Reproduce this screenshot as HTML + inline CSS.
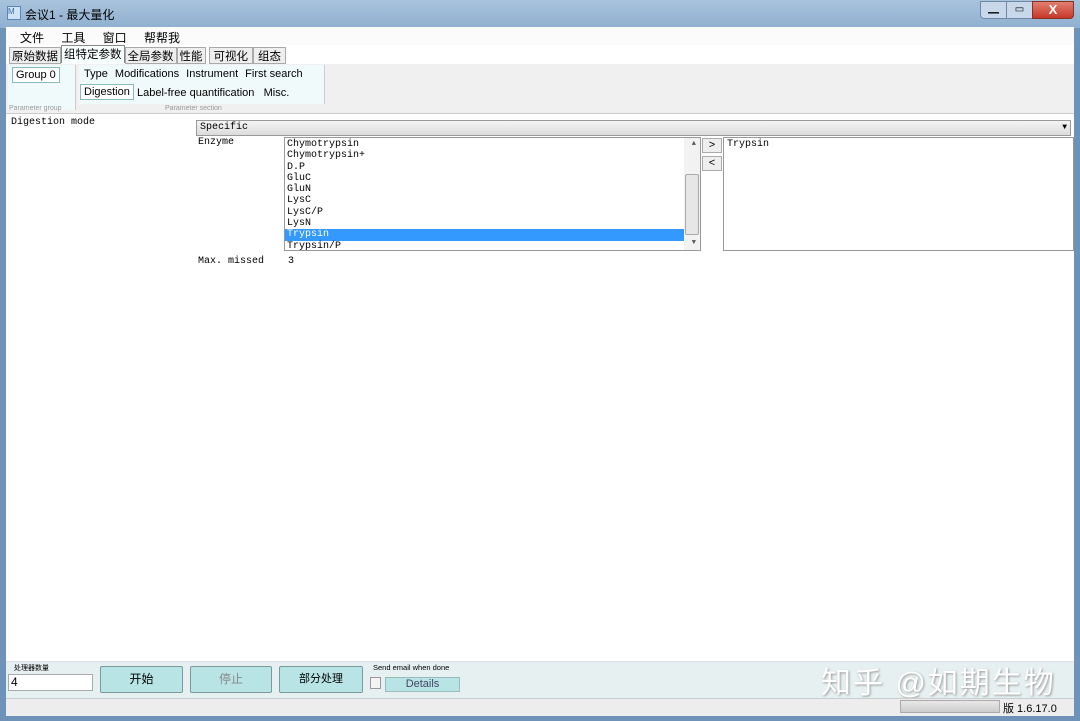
<!DOCTYPE html>
<html><head><meta charset="utf-8"><style>
*{margin:0;padding:0;box-sizing:border-box}
body{width:1080px;height:721px;overflow:hidden;background:#6f93b8;font-family:"Liberation Sans","Noto Sans CJK SC",sans-serif;font-size:11px;color:#000;position:relative}
.a{position:absolute}
.mono{font-family:"Liberation Mono","Noto Sans CJK SC",monospace;font-size:10px}
.btn{position:absolute;top:666px;height:27px;background:#b8e4e6;border:1px solid #7a9a9c;border-radius:2px;text-align:center;line-height:25px;font-size:12px}
</style></head><body>
<div class="a" style="left:0;top:0;width:1080px;height:28px;background:linear-gradient(#a9c3dc,#8fb0d0)"></div>
<div class="a" style="left:7px;top:6px;width:14px;height:14px;background:#cfe3f7;border:1px solid #5a86b5;font-size:8px;color:#3b6ea5">M</div>
<div class="a" style="left:25px;top:6px;font-size:12px">会议1 - 最大量化</div>
<div class="a" style="left:980px;top:1px;width:27px;height:18px;background:#c8d8ea;border:1px solid #6e8aa8;border-radius:0 0 0 4px;text-align:center;font-size:11px;line-height:14px">▁</div>
<div class="a" style="left:1006px;top:1px;width:27px;height:18px;background:#c8d8ea;border:1px solid #6e8aa8;text-align:center;font-size:10px;line-height:16px">▭</div>
<div class="a" style="left:1032px;top:1px;width:42px;height:18px;background:linear-gradient(#e08070,#c8382a);border:1px solid #8a3020;border-radius:0 0 4px 0;color:#fff;text-align:center;font-weight:bold;font-size:13px;line-height:16px">X</div>
<div class="a" style="left:6px;top:27px;width:1068px;height:689px;background:#fff"></div>
<div class="a" style="left:6px;top:27px;width:1068px;height:19px;background:#fbfbfb"></div>
<div class="a" style="left:20px;top:29px;font-size:12px;word-spacing:14px">文件 工具 窗口 帮帮我</div>
<div class="a" style="left:6px;top:45px;width:1068px;height:20px;background:#fff"></div>
<div class="a" style="left:9px;top:47px;font-size:11.5px;display:flex">
<span style="border:1px solid #aaa;background:#eee;padding:0 2px;height:17px">原始数据</span>
<span style="border:1px solid #888;border-bottom:none;background:#f8ffff;padding:0 2px;height:18px;margin-top:-2px">组特定参数</span>
<span style="border:1px solid #aaa;background:#eee;padding:0 2px;height:17px">全局参数</span>
<span style="border:1px solid #aaa;background:#eee;padding:0 2px;height:17px">性能</span>
<span style="border:1px solid #aaa;background:#eee;padding:0 4px;height:17px;margin-left:3px">可视化</span>
<span style="border:1px solid #aaa;background:#eee;padding:0 4px;height:17px">组态</span></div>
<div class="a" style="left:6px;top:64px;width:1068px;height:50px;background:#f0f0f0;border-bottom:1px solid #ccc"></div>
<div class="a" style="left:8px;top:65px;width:68px;height:45px;background:#f0fafa;border-right:1px solid #ccc"></div>
<div class="a" style="left:12px;top:67px;border:1px solid #8bb;background:#fff;padding:1px 3px">Group 0</div>
<div class="a" style="left:79px;top:65px;width:246px;height:39px;background:#f0fafa;border-right:1px solid #ccc"></div>
<div class="a" style="left:84px;top:68px;word-spacing:4px">Type Modifications Instrument First<span style="word-spacing:0"> search</span></div>
<div class="a" style="left:80px;top:84px;border:1px solid #8bb;background:#fff;padding:1px 3px">Digestion</div>
<div class="a" style="left:137px;top:87px">Label-free quantification&nbsp;&nbsp; Misc.</div>
<div class="a" style="left:9px;top:105px;font-size:7px;color:#999">Parameter group</div>
<div class="a" style="left:165px;top:105px;font-size:7px;color:#999">Parameter section</div>
<div class="a mono" style="left:11px;top:117px">Digestion mode</div>
<div class="a mono" style="left:196px;top:120px;width:875px;height:16px;background:linear-gradient(#f4f4f4,#dcdcdc);border:1px solid #999;padding-left:3px;line-height:14px">Specific<span style="position:absolute;right:3px;font-size:8px">▼</span></div>
<div class="a mono" style="left:198px;top:137px">Enzyme</div>
<div class="a mono" style="left:284px;top:137px;width:417px;height:114px;border:1px solid #999;background:#fff;line-height:11.3px;padding-top:1px">
<div style="padding-left:2px">Chymotrypsin</div><div style="padding-left:2px">Chymotrypsin+</div><div style="padding-left:2px">D.P</div><div style="padding-left:2px">GluC</div><div style="padding-left:2px">GluN</div><div style="padding-left:2px">LysC</div><div style="padding-left:2px">LysC/P</div><div style="padding-left:2px">LysN</div><div style="padding-left:2px;background:#3399ff;color:#fff;width:400px">Trypsin</div><div style="padding-left:2px">Trypsin/P</div>
<div class="a" style="right:0;top:0;width:16px;height:112px;background:#f2f2f2"></div>
<div class="a" style="right:1px;top:36px;width:14px;height:61px;background:#e6e6e6;border:1px solid #aaa;border-radius:2px"></div>
<div class="a" style="right:4px;top:1px;font-size:7px;color:#555">▲</div><div class="a" style="right:4px;top:100px;font-size:7px;color:#555">▼</div></div>
<div class="a" style="left:702px;top:138px;width:20px;height:15px;border:1px solid #aaa;background:#eee;text-align:center;line-height:13px">&gt;</div>
<div class="a" style="left:702px;top:156px;width:20px;height:15px;border:1px solid #aaa;background:#eee;text-align:center;line-height:13px">&lt;</div>
<div class="a mono" style="left:723px;top:137px;width:351px;height:114px;border:1px solid #999;padding-left:3px;padding-top:1px">Trypsin</div>
<div class="a mono" style="left:198px;top:256px">Max. missed&nbsp;&nbsp;&nbsp; 3</div>
<div class="a" style="left:6px;top:661px;width:1068px;height:37px;background:#e6f0f0;border-top:1px solid #dde"></div>
<div class="a" style="left:14px;top:663px;font-size:7px">处理器数量</div>
<div class="a" style="left:8px;top:674px;width:85px;height:17px;background:#fff;border:1px solid #aaa;padding-left:2px;font-size:12px">4</div>
<div class="btn" style="left:100px;width:83px">开始</div>
<div class="btn" style="left:190px;width:82px;color:#888">停止</div>
<div class="btn" style="left:279px;width:84px;font-size:11px">部分处理</div>
<div class="a" style="left:373px;top:663px;font-size:7.5px">Send email when done</div>
<div class="a" style="left:370px;top:677px;width:11px;height:12px;border:1px solid #999;background:#f3f3f3"></div>
<div class="a" style="left:385px;top:677px;width:75px;height:15px;background:#b8e4e6;border:1px solid #9bb;text-align:center;line-height:13px;color:#446">Details</div>
<div class="a" style="left:821px;top:658px;font-size:30px;color:#fff;text-shadow:1px 1px 2px #999;letter-spacing:2px">知乎 @如期生物</div>
<div class="a" style="left:6px;top:698px;width:1068px;height:18px;background:#ededed;border-top:1px solid #ccc"></div>
<div class="a" style="left:900px;top:700px;width:100px;height:13px;background:linear-gradient(#e8e8e8,#ccc);border:1px solid #aaa"></div>
<div class="a" style="left:1003px;top:700px;font-size:11px">版 1.6.17.0</div>
</body></html>
